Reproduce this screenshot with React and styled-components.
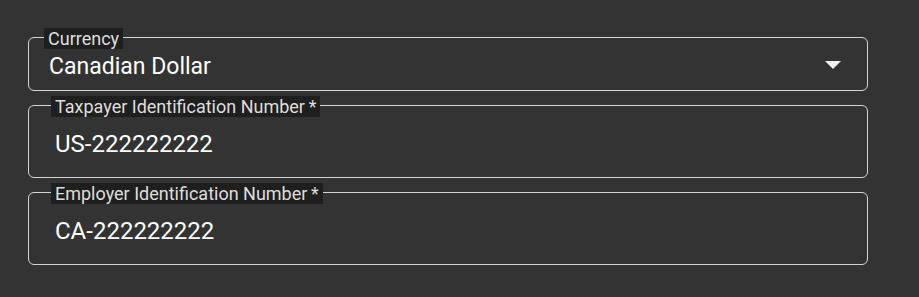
import React from 'react';
import styled, { createGlobalStyle } from 'styled-components';

const GlobalStyle = createGlobalStyle`
  html, body {
    margin: 0;
    padding: 0;
    background: #333333;
  }
  body {
    font-family: Roboto, "Liberation Sans", sans-serif;
  }
`;

const Page = styled.div`
  display: flex;
  flex-direction: column;
  gap: 14px;
  width: 840px;
  padding: 37px 0 0 28px;
`;

const Field = styled.div`
  position: relative;
  box-sizing: border-box;
  height: ${p => p.$height}px;
  border: 1.5px solid #d4d4d4;
  border-radius: 6px;
  display: flex;
  align-items: center;
  padding: ${p => p.$pad};
  color: #ffffff;
  font-size: ${p => p.$size}px;
`;

const Label = styled.span`
  position: absolute;
  left: ${p => p.$left}px;
  top: -10px;
  height: 21px;
  line-height: 21px;
  padding: 0 4px;
  background: #1f1f1f;
  color: #dedede;
  font-size: 18px;
  white-space: nowrap;
`;

const Value = styled.span`
  flex: 1;
`;

const Caret = styled.svg`
  width: 16px;
  height: 8px;
  margin-right: 26px;
  margin-top: -2px;
`;

const fields = [
  { label: 'Taxpayer Identification Number', value: 'US-222222222' },
  { label: 'Employer Identification Number', value: 'CA-222222222' },
];

export default function App() {
  return (
    <>
      <GlobalStyle />
      <Page>
        <Field $height={54} $size={23} $pad="4px 0 0 20px">
          <Label $left={15}>Currency</Label>
          <Value>Canadian Dollar</Value>
          <Caret viewBox="0 0 16 8">
            <path d="M0 0 L16 0 L8 8 Z" fill="#f2f2f2" />
          </Caret>
        </Field>
        {fields.map(f => (
          <Field key={f.label} $height={73} $size={24} $pad="5px 0 0 26px">
            <Label $left={22}>{f.label}&thinsp;*</Label>
            <Value>{f.value}</Value>
          </Field>
        ))}
      </Page>
    </>
  );
}
